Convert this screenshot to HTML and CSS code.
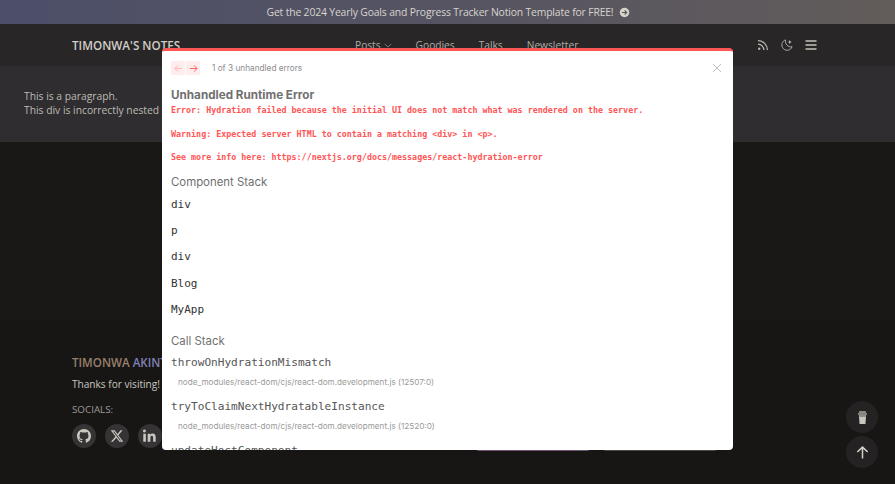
FILE: index.html
```html
<!DOCTYPE html>
<html lang="en">
<head>
<meta charset="utf-8">
<title>Timonwa's Notes</title>
<link rel="stylesheet" href="styles.css">
</head>
<body>
<div class="banner">
  <span>Get the 2024 Yearly Goals and Progress Tracker Notion Template for FREE!</span>
  <svg class="banner-icon" viewBox="0 0 12 12"><circle cx="6" cy="6" r="5.2" fill="#d6d4cd"/><path d="M3.2 6h5.2M6.2 3.8 8.4 6 6.2 8.2" fill="none" stroke="#55525a" stroke-width="1.2"/></svg>
</div>
<header class="site-header">
  <div class="logo">TIMONWA'S NOTES</div>
  <nav class="nav">
    <a class="nav-posts">Posts <svg class="chev" viewBox="0 0 10 6"><path d="M1 1l4 4 4-4" fill="none" stroke="currentColor" stroke-width=".8"/></svg></a>
    <a>Goodies</a>
    <a>Talks</a>
    <a>Newsletter</a>
  </nav>
  <div class="tools">
    <svg class="tool" viewBox="0 0 12 12"><circle cx="2.2" cy="9.8" r="1.2" fill="#b9b7ae"/><path d="M1 5.2a5.8 5.8 0 0 1 5.8 5.8M1 1.6A9.4 9.4 0 0 1 10.4 11" fill="none" stroke="#b9b7ae" stroke-width="1.3"/></svg>
    <svg class="tool" viewBox="0 0 13 13"><path d="M5 1a5.7 5.7 0 1 0 7 7.400A6 6 0 0 1 5 1z" fill="none" stroke="#b9b7ae" stroke-width="1"/><path d="M9.500 1l.6 1.700 1.700.6-1.700.6-.6 1.700-.6-1.700-1.700-.6 1.700-.6z" fill="#d4d2c9"/></svg>
    <svg class="tool" viewBox="0 0 12 12"><path d="M.5 2h11M.5 6h11M.5 10h11" stroke="#c4c2b9" stroke-width="1.7"/></svg>
  </div>
</header>
<section class="demo">
  <p>This is a paragraph.</p>
  <div>This div is incorrectly nested inside the paragraph.</div>
</section>
<main class="blank"></main>
<footer class="footer">
  <div class="footer-left">
    <div class="brand"><span class="brand-a">TIMONWA</span> <span class="brand-b">AKINTOKUN</span></div>
    <p class="thanks">Thanks for visiting!</p>
    <div class="socials-label">SOCIALS:</div>
    <div class="socials">
      <span class="social"><svg viewBox="0 0 16 16"><path fill="#c9c7c0" d="M8 0C3.58 0 0 3.58 0 8c0 3.54 2.29 6.53 5.47 7.59.4.07.55-.17.55-.38 0-.19-.01-.82-.01-1.49-2.01.37-2.53-.49-2.69-.94-.09-.23-.48-.94-.82-1.13-.28-.15-.68-.52-.01-.53.63-.01 1.08.58 1.23.82.72 1.21 1.87.87 2.33.66.07-.52.28-.87.51-1.07-1.78-.2-3.64-.89-3.64-3.95 0-.87.31-1.59.82-2.15-.08-.2-.36-1.02.08-2.12 0 0 .67-.21 2.2.82.64-.18 1.32-.27 2-.27.68 0 1.36.09 2 .27 1.53-1.04 2.2-.82 2.2-.82.44 1.1.16 1.92.08 2.12.51.56.82 1.27.82 2.15 0 3.07-1.87 3.75-3.65 3.95.29.25.54.73.54 1.48 0 1.07-.01 1.93-.01 2.2 0 .21.15.46.55.38A8.013 8.013 0 0016 8c0-4.42-3.58-8-8-8z"/></svg></span>
      <span class="social"><svg viewBox="0 0 24 24"><path fill="#c9c7c0" d="M18.244 2.25h3.308l-7.227 8.26 8.502 11.24H16.17l-5.214-6.817L4.99 21.75H1.68l7.73-8.835L1.254 2.25H8.08l4.713 6.231zm-1.161 17.52h1.833L7.084 4.126H5.117z"/></svg></span>
      <span class="social"><svg viewBox="0 0 24 24"><path fill="#c9c7c0" d="M4.98 3.5a2.5 2.5 0 11-5 0 2.5 2.5 0 015 0zM.5 8h4.4v14H.5zM8 8h4.2v1.9h.06c.6-1.1 2-2.3 4.2-2.3 4.5 0 5.3 3 5.3 6.8V22h-4.4v-6.7c0-1.6 0-3.6-2.2-3.6s-2.500 1.7-2.500 3.5V22H8z"/></svg></span>
    </div>
  </div>
  <div class="footer-links">
    <span class="pill pill-purple"></span>
    <span class="pill pill-grey"></span>
  </div>
</footer>

<div class="float-btn float-coffee">
  <svg viewBox="0 0 12 16" width="11" height="15"><path d="M2.5 1h7l.5 2H2z" fill="#8f8d86"/><path d="M1 3.200h10v1.800H1z" fill="#8f8d86"/><path d="M2 5h8l-.8 10H2.800z" fill="#c9c7c0"/><path d="M2.300 5h7.400l-.2 2.400H2.500z" fill="#8f8d86"/></svg>
</div>
<div class="float-btn float-up">
  <svg viewBox="0 0 12 12" width="13" height="13"><path d="M6 11.500V1M1.200 5.600 6 1l4.800 4.600" fill="none" stroke="#d4d2c9" stroke-width="1.4"/></svg>
</div>

<div class="modal" role="dialog">
  <div class="modal-top">
    <div class="pager">
      <span class="pager-btn pager-off"><svg viewBox="0 0 10 10"><path d="M9 5H1M4.500 1.500 1 5l3.500 3.500" fill="none" stroke="currentColor" stroke-width="1"/></svg></span>
      <span class="pager-btn"><svg viewBox="0 0 10 10"><path d="M1 5h8M5.500 1.500 9 5 5.500 8.500" fill="none" stroke="currentColor" stroke-width="1"/></svg></span>
    </div>
    <span class="count">1 of 3 unhandled errors</span>
    <svg class="close" viewBox="0 0 10 10"><path d="M1 1l8 8M9 1 1 9" stroke="#bdbdbd" stroke-width="1"/></svg>
  </div>
  <h1 class="title">Unhandled Runtime Error</h1>
  <pre class="message">Error: Hydration failed because the initial UI does not match what was rendered on the server.

Warning: Expected server HTML to contain a matching &lt;div&gt; in &lt;p&gt;.

See more info here: https://nextjs.org/docs/messages/react-hydration-error</pre>
  <h2 class="section-title">Component Stack</h2>
  <ul class="components">
    <li>div</li>
    <li>p</li>
    <li>div</li>
    <li>Blog</li>
    <li>MyApp</li>
  </ul>
  <h2 class="section-title call-title">Call Stack</h2>
  <div class="frame">
    <div class="fn">throwOnHydrationMismatch</div>
    <div class="file">node_modules/react-dom/cjs/react-dom.development.js (12507:0)</div>
  </div>
  <div class="frame">
    <div class="fn">tryToClaimNextHydratableInstance</div>
    <div class="file">node_modules/react-dom/cjs/react-dom.development.js (12520:0)</div>
  </div>
  <div class="frame">
    <div class="fn">updateHostComponent</div>
  </div>
</div>
</body>
</html>
```
FILE: styles.css
```css
* { box-sizing: border-box; }
html, body { margin: 0; padding: 0; }
body {
  position: relative;
  width: 895px;
  height: 484px;
  overflow: hidden;
  background: #171615;
  font-family: "Open Sans", "Liberation Sans", sans-serif;
  color: #c9c7c0;
  display: flex;
  flex-direction: column;
}
.banner {
  height: 24px;
  flex: none;
  display: flex;
  align-items: center;
  justify-content: center;
  gap: 6px;
  padding-left: 2px;
  background: linear-gradient(90deg, #4c4f69, #565462 50%, #625c5a);
  color: #d6d4cd;
  font-size: 10.4px;
  letter-spacing: -0.165px;
}
.banner-icon { width: 11px; height: 11px; }
.site-header {
  height: 42px;
  flex: none;
  display: flex;
  align-items: center;
  padding: 0 78px 0 72px;
  background: #282627;
}
.logo { font-size: 11.7px; font-weight: 600; color: #d0cec7; width: 283px; }
.nav { display: flex; gap: 24px; font-size: 10.2px; color: #aeaca5; }
.nav a { display: flex; align-items: center; gap: 3px; }
.chev { width: 8px; height: 5px; }
.tools { margin-left: auto; display: flex; align-items: center; gap: 12px; }
.tool { width: 12px; height: 12px; display: block; }
.demo {
  height: 76px;
  flex: none;
  padding: 23px 24px 0;
  background: #2f2d2f;
  color: #bdbbb4;
  font-size: 10.3px;
  line-height: 14px;
}
.demo p { margin: 0; }
.blank { height: 178px; flex: none; background: #1a1817; }
.footer {
  flex: 1;
  display: flex;
  background: #171615;
  padding: 35px 0 0 72px;
}
.footer-left { width: 404px; }
.brand { font-size: 11.6px; font-weight: 600; line-height: 16px; }
.brand-a { color: #97806c; }
.brand-b { color: #7f80b4; }
.thanks { margin: 5px 0 0; font-size: 10.1px; line-height: 16px; color: #c9c7c0; }
.socials-label { margin-top: 10px; font-size: 9.8px; font-weight: 500; line-height: 16px; color: #9d9b95; }
.socials { display: flex; gap: 9px; margin-top: 6px; }
.social {
  width: 24px;
  height: 24px;
  border-radius: 50%;
  background: #353333;
  display: flex;
  align-items: center;
  justify-content: center;
}
.social svg { width: 14px; height: 14px; }
.footer-links { display: flex; align-items: flex-start; gap: 13px; padding-top: 76px; }
.pill { width: 114px; height: 20px; border-radius: 3px; }
.pill-purple { background: #6d5573; }
.pill-grey { background: #4a4848; }
.float-btn {
  position: absolute;
  left: 846px;
  width: 32px;
  height: 32px;
  border-radius: 50%;
  background: #242222;
  display: flex;
  align-items: center;
  justify-content: center;
}
.float-coffee { top: 401px; }
.float-up { top: 436px; }
.modal {
  position: absolute;
  left: 162px;
  top: 48px;
  width: 571px;
  height: 402px;
  overflow: hidden;
  background: #fff;
  border-top: 3px solid #ff5555;
  border-radius: 4px;
  padding: 10px 9px 0;
  color: #666;
  font-family: "Inter", "Liberation Sans", sans-serif;
}
.modal-top { display: flex; align-items: center; height: 14px; }
.pager { display: flex; gap: 1px; }
.pager-btn {
  width: 14px;
  height: 14px;
  background: #ffecec;
  color: #ff5555;
  display: flex;
  align-items: center;
  justify-content: center;
}
.pager-btn:first-child { border-radius: 2px 0 0 2px; }
.pager-btn:last-child { border-radius: 0 2px 2px 0; }
.pager-off { color: #ffb3b3; }
.pager-btn svg { width: 9px; height: 9px; }
.count { margin-left: 12px; font-size: 8.25px; color: #8d8d8d; }
.close { width: 10px; height: 10px; margin-left: auto; margin-right: 2px; }
.title {
  margin: 12px 0 0;
  font-size: 11.7px;
  line-height: 16px;
  font-weight: 700;
  color: #707070;
}
.message {
  margin: 2px 0 0;
  font-family: "DejaVu Sans Mono", monospace;
  font-size: 8.36px;
  font-weight: 700;
  line-height: 11.8px;
  color: #ff5555;
}
.section-title {
  margin: 10px 0 0;
  font-size: 11.4px;
  line-height: 16px;
  font-weight: 400;
  color: #707070;
}
.components {
  list-style: none;
  margin: 2px 0 0;
  padding: 0;
  font-family: "DejaVu Sans Mono", monospace;
  font-size: 11px;
  line-height: 26.2px;
  color: #333;
}
.call-title { margin-top: 10px; }
.frame { margin-top: 7px; }
.frame + .frame { margin-top: 5px; }
.fn {
  font-family: "DejaVu Sans Mono", monospace;
  font-size: 11.1px;
  line-height: 14px;
  color: #555;
}
.file {
  margin-top: 6px;
  padding-left: 7px;
  font-size: 8.17px;
  line-height: 12px;
  color: #9a9a9a;
  margin-bottom: 12px;
}
```
